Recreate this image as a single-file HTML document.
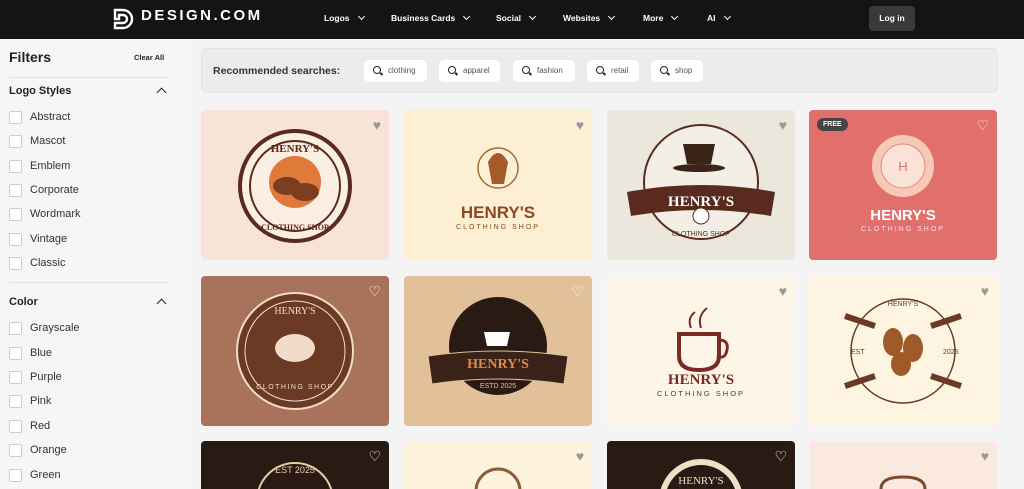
<!DOCTYPE html>
<html style="width:1024px;height:489px;overflow:hidden"><head><meta charset="utf-8"><style>
*{box-sizing:border-box;margin:0;padding:0}
body{width:1024px;height:489px;overflow:hidden;background:#f4f4f4;font-family:"Liberation Sans",sans-serif;position:relative}
.hdr{position:absolute;left:0;top:0;width:1024px;height:39px;background:#141414}
.logo{position:absolute;left:112px;top:7px;color:#fff;font-weight:bold;font-size:15px;letter-spacing:2.5px}
.nav{position:absolute;top:13px;color:#fff;font-size:8.5px;font-weight:bold}
.nav:after{content:"";display:inline-block;width:4px;height:4px;border-right:1.2px solid #fff;border-bottom:1.2px solid #fff;transform:rotate(45deg);margin-left:9px;position:relative;top:-2px}
.login{position:absolute;left:869px;top:6px;width:46px;height:25px;background:#3a3a3a;border-radius:4px;color:#fff;font-size:8.5px;font-weight:bold;text-align:center;line-height:25px}
.side{position:absolute;left:0;top:39px;width:185px;height:450px;background:#f6f6f6}
.t{position:absolute;color:#222}
.cb{position:absolute;left:9px;width:13px;height:13px;border:1px solid #ccc;background:#fff;border-radius:2px}
.lb{position:absolute;left:30px;font-size:11px;color:#333}
.chev{position:absolute;left:158px;width:7px;height:7px;border-left:1.6px solid #222;border-top:1.6px solid #222;transform:rotate(45deg)}
.rec{position:absolute;left:201px;top:48px;width:797px;height:45px;background:#ececec;border-radius:6px;border:1px solid #e4e4e4}
.chip{position:absolute;top:11px;height:22px;background:#fff;border-radius:5px;font-size:8px;color:#555;line-height:22px;padding-left:24px}
.chip:before{content:"";position:absolute;left:9px;top:6px;width:6px;height:6px;border:1.5px solid #222;border-radius:50%}
.chip:after{content:"";position:absolute;left:16px;top:13px;width:3px;height:1.5px;background:#222;transform:rotate(45deg)}
.card{position:absolute;width:188px;height:150px;border-radius:4px;overflow:hidden}
.card.last{height:48px;border-radius:4px 4px 0 0}
.card svg{position:absolute;left:0;top:0}
.hrt{position:absolute;right:8px;top:8px;font-size:14px;color:#fff;line-height:1}
.free{position:absolute;left:8px;top:8px;background:#444;color:#fff;font-size:7px;font-weight:bold;padding:3px 6px;border-radius:8px}
</style></head><body>
<div class="hdr">
<svg style="position:absolute;left:112px;top:8px" width="22" height="22" viewBox="0 0 22 22"><path d="M3 2h8a9 9 0 0 1 0 18H3v-5h8a4 4 0 0 0 0-8H7v4H3z" fill="none" stroke="#fff" stroke-width="2.4"/></svg>
<div class="logo" style="left:141px">DESIGN.COM</div>
<div class="nav" style="left:324px">Logos</div>
<div class="nav" style="left:391px">Business Cards</div>
<div class="nav" style="left:496px">Social</div>
<div class="nav" style="left:563px">Websites</div>
<div class="nav" style="left:643px">More</div>
<div class="nav" style="left:707px">AI</div>
<div class="login">Log in</div>
</div>
<div class="side">
<div class="t" style="left:9px;top:10px;font-size:14px;font-weight:bold">Filters</div>
<div class="t" style="left:134px;top:14px;font-size:7.5px;font-weight:bold">Clear All</div>
<div style="position:absolute;left:9px;top:38px;width:159px;height:1px;background:#e2e2e2"></div>
<div class="t" style="left:9px;top:46px;font-size:11px;font-weight:bold">Logo Styles</div>
<div class="chev" style="top:50px"></div>
<div class="cb" style="top:72px"></div><div class="lb" style="top:72px">Abstract</div>
<div class="cb" style="top:96px"></div><div class="lb" style="top:96px">Mascot</div>
<div class="cb" style="top:121px"></div><div class="lb" style="top:121px">Emblem</div>
<div class="cb" style="top:145px"></div><div class="lb" style="top:145px">Corporate</div>
<div class="cb" style="top:169px"></div><div class="lb" style="top:169px">Wordmark</div>
<div class="cb" style="top:194px"></div><div class="lb" style="top:194px">Vintage</div>
<div class="cb" style="top:218px"></div><div class="lb" style="top:218px">Classic</div>
<div style="position:absolute;left:9px;top:243px;width:159px;height:1px;background:#e2e2e2"></div>
<div class="t" style="left:9px;top:257px;font-size:11px;font-weight:bold">Color</div>
<div class="chev" style="top:261px"></div>
<div class="cb" style="top:283px"></div><div class="lb" style="top:283px">Grayscale</div>
<div class="cb" style="top:308px"></div><div class="lb" style="top:308px">Blue</div>
<div class="cb" style="top:332px"></div><div class="lb" style="top:332px">Purple</div>
<div class="cb" style="top:356px"></div><div class="lb" style="top:356px">Pink</div>
<div class="cb" style="top:381px"></div><div class="lb" style="top:381px">Red</div>
<div class="cb" style="top:405px"></div><div class="lb" style="top:405px">Orange</div>
<div class="cb" style="top:430px"></div><div class="lb" style="top:430px">Green</div>
</div>
<div class="rec">
<div class="t" style="left:11px;top:16px;font-size:10.5px;font-weight:bold;color:#333">Recommended searches:</div>
<div class="chip" style="left:162px;width:63px">clothing</div>
<div class="chip" style="left:237px;width:61px">apparel</div>
<div class="chip" style="left:311px;width:62px">fashion</div>
<div class="chip" style="left:385px;width:52px">retail</div>
<div class="chip" style="left:449px;width:52px">shop</div>
</div>

<div class="card" style="left:201px;top:110px;background:#f7e4d6"><svg width="188" height="150"><circle cx="94" cy="76" r="55" fill="#fbeee3" stroke="#5a2a1e" stroke-width="4"/><circle cx="94" cy="76" r="45" fill="none" stroke="#5a2a1e" stroke-width="2"/><circle cx="94" cy="72" r="26" fill="#e07a3a"/><ellipse cx="86" cy="76" rx="14" ry="9" fill="#7a3e20"/><ellipse cx="104" cy="82" rx="14" ry="9" fill="#7a3e20"/><text x="94" y="42" text-anchor="middle" font-size="11" font-weight="bold" fill="#5a2a1e" font-family="Liberation Serif">HENRY'S</text><text x="94" y="120" text-anchor="middle" font-size="8" font-weight="bold" fill="#5a2a1e" font-family="Liberation Serif">CLOTHING SHOP</text></svg><div class="hrt" style="color:#999">♥</div></div>
<div class="card" style="left:404px;top:110px;background:#fdefd4"><svg width="188" height="150"><circle cx="94" cy="58" r="20" fill="none" stroke="#a56a3a" stroke-width="1.5"/><path d="M84 52q10-18 20 0l-4 22h-12z" fill="#a55a2a"/><text x="94" y="108" text-anchor="middle" font-size="17" font-weight="bold" fill="#8a4a22">HENRY'S</text><text x="94" y="119" text-anchor="middle" font-size="7" fill="#8a4a22" letter-spacing="2">CLOTHING SHOP</text></svg><div class="hrt" style="color:#999">♥</div></div>
<div class="card" style="left:607px;top:110px;background:#ebe7dc"><svg width="188" height="150"><circle cx="94" cy="72" r="57" fill="#f4efe6" stroke="#5a2a1e" stroke-width="2"/><path d="M76 34h32l-4 20h-24z" fill="#3a2418"/><ellipse cx="92" cy="58" rx="26" ry="4" fill="#3a2418"/><path d="M20 82q74-14 148 0l-4 24q-70-12-140 0z" fill="#5a2a1e"/><text x="94" y="96" text-anchor="middle" font-size="15" font-weight="bold" fill="#fff" font-family="Liberation Serif">HENRY'S</text><circle cx="94" cy="106" r="8" fill="#fff" stroke="#5a2a1e"/><text x="94" y="126" text-anchor="middle" font-size="7" fill="#5a2a1e">CLOTHING SHOP</text></svg><div class="hrt" style="color:#999">♥</div></div>
<div class="card" style="left:809px;top:110px;background:#e16f6c"><svg width="188" height="150"><circle cx="94" cy="56" r="31" fill="#f6c8b8"/><circle cx="94" cy="56" r="22" fill="#fbe2d6" stroke="#e38b7d"/><text x="94" y="61" text-anchor="middle" font-size="13" fill="#e16f6c">H</text><text x="94" y="110" text-anchor="middle" font-size="15" font-weight="bold" fill="#fff">HENRY'S</text><text x="94" y="121" text-anchor="middle" font-size="7" fill="#fde" letter-spacing="2">CLOTHING SHOP</text></svg><div class="free">FREE</div><div class="hrt">♡</div></div>
<div class="card" style="left:201px;top:276px;background:#a8735a"><svg width="188" height="150"><circle cx="94" cy="75" r="58" fill="#6a3a24" stroke="#f1dccb" stroke-width="2"/><circle cx="94" cy="75" r="50" fill="none" stroke="#f1dccb" stroke-width="1"/><ellipse cx="94" cy="72" rx="20" ry="14" fill="#f1dccb"/><text x="94" y="38" text-anchor="middle" font-size="10" fill="#f1dccb" font-family="Liberation Serif">HENRY'S</text><text x="94" y="113" text-anchor="middle" font-size="7" fill="#f1dccb" letter-spacing="1.5">CLOTHING SHOP</text></svg><div class="hrt">♡</div></div>
<div class="card" style="left:404px;top:276px;background:#e2c09a"><svg width="188" height="150"><circle cx="94" cy="70" r="50" fill="#2a1a14" stroke="#e2c09a" stroke-width="2"/><path d="M24 80q70-10 140 0l-4 28q-66-10-132 0z" fill="#3a2218" stroke="#e2c09a"/><text x="94" y="92" text-anchor="middle" font-size="14" font-weight="bold" fill="#e08a4a" font-family="Liberation Serif">HENRY'S</text><path d="M80 56h26l-3 14h-20z" fill="#fff"/><text x="94" y="112" text-anchor="middle" font-size="7" fill="#e2c09a">ESTD 2025</text></svg><div class="hrt">♡</div></div>
<div class="card" style="left:607px;top:276px;background:#fdf6e8"><svg width="188" height="150"><path d="M72 58h40v22q0 14-20 14t-20-14z" fill="none" stroke="#7a2a22" stroke-width="4"/><path d="M112 64q10 0 8 10t-10 6" fill="none" stroke="#7a2a22" stroke-width="3"/><path d="M84 52q-4-10 4-16M94 52q-4-12 6-20" fill="none" stroke="#7a2a22" stroke-width="2"/><text x="94" y="108" text-anchor="middle" font-size="15" font-weight="bold" fill="#7a2a22" font-family="Liberation Serif">HENRY'S</text><text x="94" y="120" text-anchor="middle" font-size="7.5" fill="#7a2a22" letter-spacing="2">CLOTHING SHOP</text></svg><div class="hrt" style="color:#999">♥</div></div>
<div class="card" style="left:809px;top:276px;background:#fdf5e1"><svg width="188" height="150"><circle cx="94" cy="75" r="52" fill="none" stroke="#6a3a24" stroke-width="1.5"/><ellipse cx="84" cy="66" rx="10" ry="14" fill="#a05a2a"/><ellipse cx="104" cy="72" rx="10" ry="14" fill="#a05a2a"/><ellipse cx="92" cy="88" rx="10" ry="12" fill="#a05a2a"/><path d="M36 40l30 10M152 40l-30 10M36 110l30-10M152 110l-30-10" stroke="#6a3a24" stroke-width="6"/><text x="94" y="30" text-anchor="middle" font-size="7" fill="#6a3a24">HENRY'S</text><text x="42" y="78" font-size="7" fill="#6a3a24">EST</text><text x="134" y="78" font-size="7" fill="#6a3a24">2025</text></svg><div class="hrt" style="color:#999">♥</div></div>
<div class="card last" style="left:201px;top:441px;background:#2a1a14"><svg width="188" height="48"><circle cx="94" cy="60" r="38" fill="none" stroke="#e8cfa8" stroke-width="2"/><text x="94" y="32" text-anchor="middle" font-size="9" fill="#e8cfa8">EST 2025</text></svg><div class="hrt">♡</div></div>
<div class="card last" style="left:404px;top:441px;background:#fdf3dd"><svg width="188" height="48"><circle cx="94" cy="50" r="22" fill="none" stroke="#8a5a3a" stroke-width="3"/></svg><div class="hrt" style="color:#999">♥</div></div>
<div class="card last" style="left:607px;top:441px;background:#2a1a14"><svg width="188" height="48"><circle cx="94" cy="60" r="42" fill="#f0e0c8"/><circle cx="94" cy="60" r="36" fill="#2a1a14"/><text x="94" y="43" text-anchor="middle" font-size="11" fill="#f0e0c8" font-family="Liberation Serif">HENRY'S</text></svg><div class="hrt">♡</div></div>
<div class="card last" style="left:809px;top:441px;background:#fbe9df"><svg width="188" height="48"><path d="M72 48q0-12 22-12t22 12" fill="none" stroke="#7a4a2a" stroke-width="3"/></svg><div class="hrt" style="color:#999">♥</div></div>
</body></html>
